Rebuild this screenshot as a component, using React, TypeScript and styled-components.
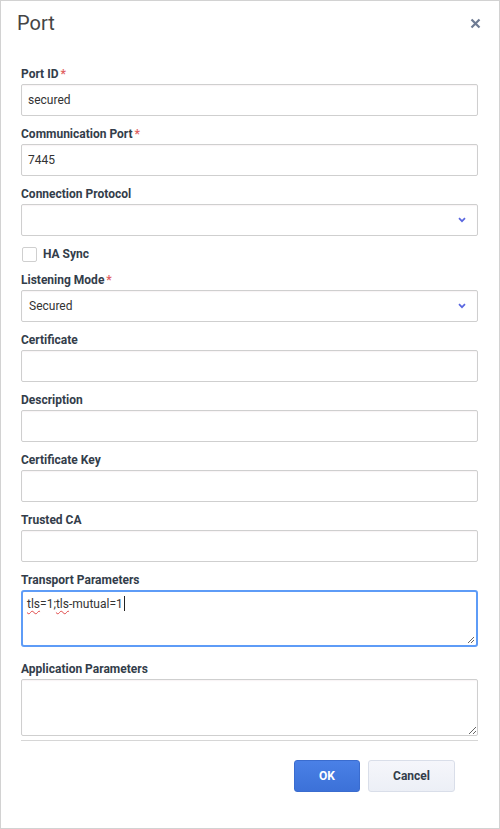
import * as React from 'react';
import styled, { createGlobalStyle } from 'styled-components';

const GlobalStyle = createGlobalStyle`
  html, body {
    margin: 0;
    padding: 0;
    background: #ffffff;
  }
  body {
    font-family: Roboto, "Liberation Sans", Arial, sans-serif;
    color: #333d4a;
  }
  * {
    box-sizing: border-box;
  }
`;

const Window = styled.div`
  width: 500px;
  height: 829px;
  border: 1px solid #d2d2d2;
  background: #ffffff;
  display: flex;
  flex-direction: column;
`;

const Header = styled.div`
  display: flex;
  align-items: center;
  justify-content: space-between;
  padding: 9px 17px 0 16px;
  height: 34px;
`;

const Title = styled.h1`
  margin: 0;
  font-size: 20px;
  line-height: 24px;
  font-weight: 400;
  color: #454545;
`;

const CloseButton = styled.button`
  border: 0;
  background: none;
  padding: 0;
  width: 14px;
  height: 14px;
  display: flex;
  align-items: center;
  justify-content: center;
  cursor: pointer;
  margin-top: 2px;
`;

const Form = styled.form`
  display: flex;
  flex-direction: column;
  padding: 31px 21px 0 20px;
`;

const Field = styled.div<{ $gap?: number }>`
  display: flex;
  flex-direction: column;
  margin-bottom: ${p => p.$gap ?? 10}px;
`;

const Label = styled.label`
  font-size: 12px;
  line-height: 16px;
  font-weight: 700;
  color: #333d4a;
  margin-bottom: 2px;
`;

const Required = styled.span`
  color: #e0605f;
  margin-left: 2px;
  font-weight: 700;
`;

const Input = styled.input`
  height: 32px;
  width: 100%;
  border: 1px solid #cfcfcf;
  border-radius: 2px;
  box-shadow: inset 0 1px 1px rgba(180, 120, 140, 0.08);
  padding: 0 6px;
  font-family: Roboto, "Liberation Sans", Arial, sans-serif;
  font-size: 12px;
  color: #333;
  outline: none;
`;

const SelectBox = styled.div`
  position: relative;
  height: 32px;
  border: 1px solid #cfcfcf;
  border-radius: 2px;
  box-shadow: inset 0 1px 1px rgba(180, 120, 140, 0.08);
  padding: 0 7px;
  display: flex;
  align-items: center;
  justify-content: space-between;
  font-size: 12px;
  color: #333;
`;

const Chevron = styled.svg`
  width: 8px;
  height: 6px;
  margin-right: 4px;
`;

const CheckRow = styled.label`
  display: flex;
  align-items: center;
  height: 16px;
  margin-bottom: 10px;
  font-size: 12px;
  font-weight: 700;
  color: #333d4a;
`;

const CheckBox = styled.span`
  width: 15px;
  height: 15px;
  border: 1px solid #cfcfcf;
  border-radius: 2px;
  margin: 0 6px 0 1px;
  background: #fff;
`;

const TextArea = styled.textarea`
  height: 57px;
  width: 100%;
  border: 1px solid #cfcfcf;
  border-radius: 2px;
  box-shadow: inset 0 1px 1px rgba(180, 120, 140, 0.08);
  padding: 5px 6px;
  font-family: Roboto, "Liberation Sans", Arial, sans-serif;
  font-size: 12px;
  color: #333;
  outline: none;
  resize: vertical;
  display: block;
`;

const FocusedArea = styled.div`
  position: relative;
  height: 57px;
  border: 2px solid #5e9cf7;
  border-radius: 3px;
  padding: 4px 4px;
  font-size: 12px;
  line-height: 16px;
  color: #333;
`;

const Misspelt = styled.span`
  text-decoration: underline wavy #e04a4a;
  text-decoration-thickness: 1px;
  text-underline-offset: 2px;
`;

const Caret = styled.span`
  display: inline-block;
  width: 1px;
  height: 15px;
  background: #222;
  vertical-align: -3px;
  margin-left: 1px;
`;

const Grip = styled.svg`
  position: absolute;
  right: 1px;
  bottom: 1px;
  width: 8px;
  height: 8px;
`;

const Separator = styled.hr`
  margin: 4px 0 0;
  border: 0;
  border-top: 1px solid #d6d6d6;
  width: 100%;
`;

const Footer = styled.div`
  display: flex;
  justify-content: flex-end;
  gap: 8px;
  padding: 19px 23px 0 0;
`;

const Button = styled.button<{ $primary?: boolean }>`
  height: 32px;
  min-width: ${p => (p.$primary ? 66 : 87)}px;
  border-radius: 3px;
  font-family: Roboto, "Liberation Sans", Arial, sans-serif;
  font-size: 12px;
  font-weight: 700;
  cursor: pointer;
  border: 1px solid ${p => (p.$primary ? '#3a6ccf' : '#d9dee9')};
  background: ${p =>
    p.$primary ? 'linear-gradient(#4a80e6, #3c71d8)' : 'linear-gradient(#f5f6fb, #eceff6)'};
  color: ${p => (p.$primary ? '#ffffff' : '#333d4a')};
`;

const ChevronIcon = () => (
  <Chevron viewBox="0 0 8 6">
    <path d="M1 1.2 L4 4.2 L7 1.2" fill="none" stroke="#5a67e0" strokeWidth="1.7" />
  </Chevron>
);

const TextField = ({ label, value = '', required }: { label: string; value?: string; required?: boolean }) => (
  <Field>
    <Label>
      {label}
      {required && <Required>*</Required>}
    </Label>
    <Input defaultValue={value} />
  </Field>
);

const SelectField = ({ label, value = '', required }: { label: string; value?: string; required?: boolean }) => (
  <Field>
    <Label>
      {label}
      {required && <Required>*</Required>}
    </Label>
    <SelectBox>
      <span>{value}</span>
      <ChevronIcon />
    </SelectBox>
  </Field>
);

export default function App() {
  return (
    <>
      <GlobalStyle />
      <Window>
        <Header>
          <Title>Port</Title>
          <CloseButton type="button" aria-label="Close">
            <svg width="11" height="11" viewBox="0 0 11 11">
              <path d="M1.5 1.5 L9.5 9.5 M9.5 1.5 L1.5 9.5" stroke="#6e7b93" strokeWidth="2.2" />
            </svg>
          </CloseButton>
        </Header>
        <Form onSubmit={e => e.preventDefault()}>
          <TextField label="Port ID" value="secured" required />
          <TextField label="Communication Port" value="7445" required />
          <SelectField label="Connection Protocol" />
          <CheckRow>
            <CheckBox />
            HA Sync
          </CheckRow>
          <SelectField label="Listening Mode" value="Secured" required />
          <TextField label="Certificate" />
          <TextField label="Description" />
          <TextField label="Certificate Key" />
          <TextField label="Trusted CA" />
          <Field $gap={14}>
            <Label>Transport Parameters</Label>
            <FocusedArea role="textbox">
              <Misspelt>tls</Misspelt>=1;<Misspelt>tls</Misspelt>-mutual=1
              <Caret />
              <Grip viewBox="0 0 8 8">
                <path d="M7 1 L1 7 M7 4 L4 7" stroke="#666" strokeWidth="1" />
              </Grip>
            </FocusedArea>
          </Field>
          <Field $gap={0}>
            <Label>Application Parameters</Label>
            <TextArea />
          </Field>
          <Separator />
          <Footer>
            <Button $primary type="submit">OK</Button>
            <Button type="button">Cancel</Button>
          </Footer>
        </Form>
      </Window>
    </>
  );
}
